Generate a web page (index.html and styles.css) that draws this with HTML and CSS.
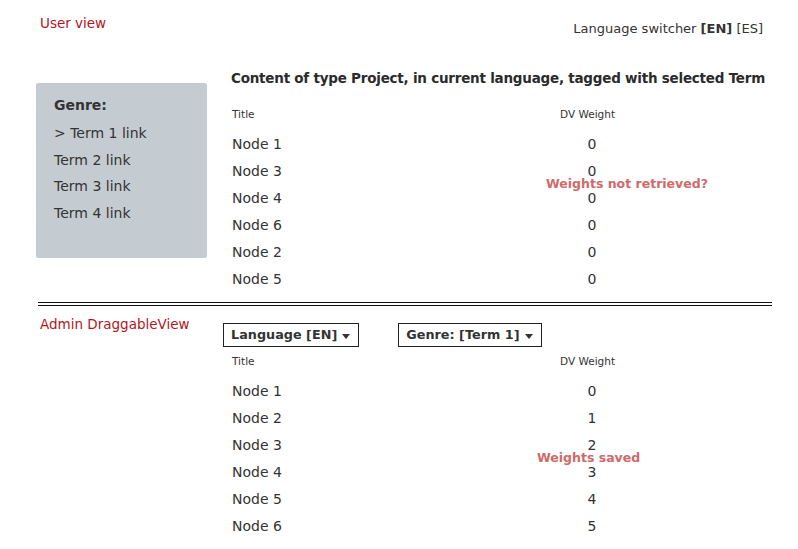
FILE: index.html
```html
<!DOCTYPE html>
<html lang="en">
<head>
<meta charset="utf-8">
<title>User view / Admin DraggableView</title>
<link rel="stylesheet" href="styles.css">
</head>
<body>
<div class="page">
  <header class="top">
    <div class="label">User view</div>
    <div class="switcher">Language switcher <b>[EN]</b> [ES]</div>
  </header>

  <section class="user">
    <aside class="sidebar">
      <div class="sidebar-title">Genre:</div>
      <ul class="terms">
        <li>&gt; Term 1 link</li>
        <li>Term 2 link</li>
        <li>Term 3 link</li>
        <li>Term 4 link</li>
      </ul>
    </aside>
    <div class="main">
      <h1 class="heading">Content of type Project, in current language, tagged with selected Term</h1>
      <div class="table">
        <div class="th">Title</div><div class="th th-w">DV Weight</div>
        <div class="td">Node 1</div><div class="td td-w">0</div>
        <div class="td">Node 3</div><div class="td td-w">0</div>
        <div class="td">Node 4</div><div class="td td-w">0</div>
        <div class="td">Node 6</div><div class="td td-w">0</div>
        <div class="td">Node 2</div><div class="td td-w">0</div>
        <div class="td">Node 5</div><div class="td td-w">0</div>
        <div class="note note-user">Weights not retrieved?</div>
      </div>
    </div>
  </section>

  <hr class="sep">

  <section class="admin">
    <div class="label">Admin DraggableView</div>
    <div class="admin-main">
      <div class="filters">
        <div class="dropdown">Language [EN] <span class="caret"></span></div>
        <div class="dropdown">Genre: [Term 1] <span class="caret"></span></div>
      </div>
      <div class="table table-admin">
        <div class="th">Title</div><div class="th th-w">DV Weight</div>
        <div class="td">Node 1</div><div class="td td-w">0</div>
        <div class="td">Node 2</div><div class="td td-w">1</div>
        <div class="td">Node 3</div><div class="td td-w">2</div>
        <div class="td">Node 4</div><div class="td td-w">3</div>
        <div class="td">Node 5</div><div class="td td-w">4</div>
        <div class="td">Node 6</div><div class="td td-w">5</div>
        <div class="note note-admin">Weights saved</div>
      </div>
    </div>
  </section>
</div>
</body>
</html>
```

FILE: styles.css
```css
html, body {
  margin: 0;
  padding: 0;
  background: #ffffff;
}
body {
  font-family: "DejaVu Sans", "Liberation Sans", sans-serif;
  color: #333333;
  font-size: 14px;
}
.page {
  width: 798px;
  height: 549px;
  overflow: hidden;
}
.top {
  display: flex;
  justify-content: space-between;
  align-items: flex-start;
  padding: 15px 35px 0 40px;
  height: 54px;
}
.label {
  color: #b3161c;
  font-size: 13.5px;
  line-height: 16px;
}
.switcher {
  font-size: 13px;
  line-height: 16px;
  margin-top: 6px;
  color: #333;
}
.switcher b {
  font-weight: bold;
}
.user {
  display: flex;
  padding-left: 36px;
}
.sidebar {
  width: 171px;
  height: 175px;
  margin-top: 14px;
  background: #c4ccd1;
  border-radius: 2px;
  box-sizing: border-box;
  padding: 13px 0 0 18px;
}
.sidebar-title {
  font-weight: bold;
  font-size: 14px;
  line-height: 18px;
  margin-bottom: 6px;
}
.terms {
  list-style: none;
  margin: 0;
  padding: 0;
}
.terms li {
  line-height: 27px;
  height: 26.7px;
  font-size: 14px;
}
.main {
  margin-left: 24px;
}
.heading {
  margin: 0;
  font-size: 13.5px;
  line-height: 18px;
  font-weight: bold;
  color: #2b2b2b;
  letter-spacing: -0.23px;
}
.table {
  position: relative;
  display: grid;
  grid-template-columns: 329px 64px;
  margin-top: 19px;
}
.th {
  font-size: 10.5px;
  line-height: 16px;
  height: 16px;
  margin-bottom: 9px;
  padding-left: 1px;
}
.th-w {
  padding-left: 0;
}
.td {
  line-height: 27px;
  height: 27px;
  font-size: 14px;
  padding-left: 1px;
}
.td-w {
  text-align: center;
  padding-left: 0;
}
.note {
  position: absolute;
  color: #d06a6a;
  font-weight: bold;
  font-size: 12.5px;
  line-height: 16px;
}
.note-user {
  left: 315px;
  top: 70px;
}
.sep {
  margin: 9px 0 0 38px;
  width: 734px;
  border: 0;
  border-top: 4px double #111;
  height: 0;
}
.admin {
  display: grid;
  grid-template-columns: 183px 1fr;
  padding-left: 40px;
  margin-top: 10px;
}
.admin-main {
  padding-top: 7px;
}
.filters {
  display: flex;
  gap: 39px;
}
.dropdown {
  height: 24px;
  box-sizing: border-box;
  border: 1px solid #222;
  padding: 0 8px 0 7px;
  font-weight: bold;
  font-size: 12.8px;
  line-height: 22px;
  color: #333;
  display: flex;
  align-items: center;
}
.caret {
  display: inline-block;
  width: 0;
  height: 0;
  border-left: 4.5px solid transparent;
  border-right: 4.5px solid transparent;
  border-top: 5px solid #333;
  margin-left: 5px;
  margin-top: 2px;
}
.table-admin {
  margin-top: 6px;
  padding-left: 8px;
}
.note-admin {
  left: 314px;
  top: 97px;
}
```
